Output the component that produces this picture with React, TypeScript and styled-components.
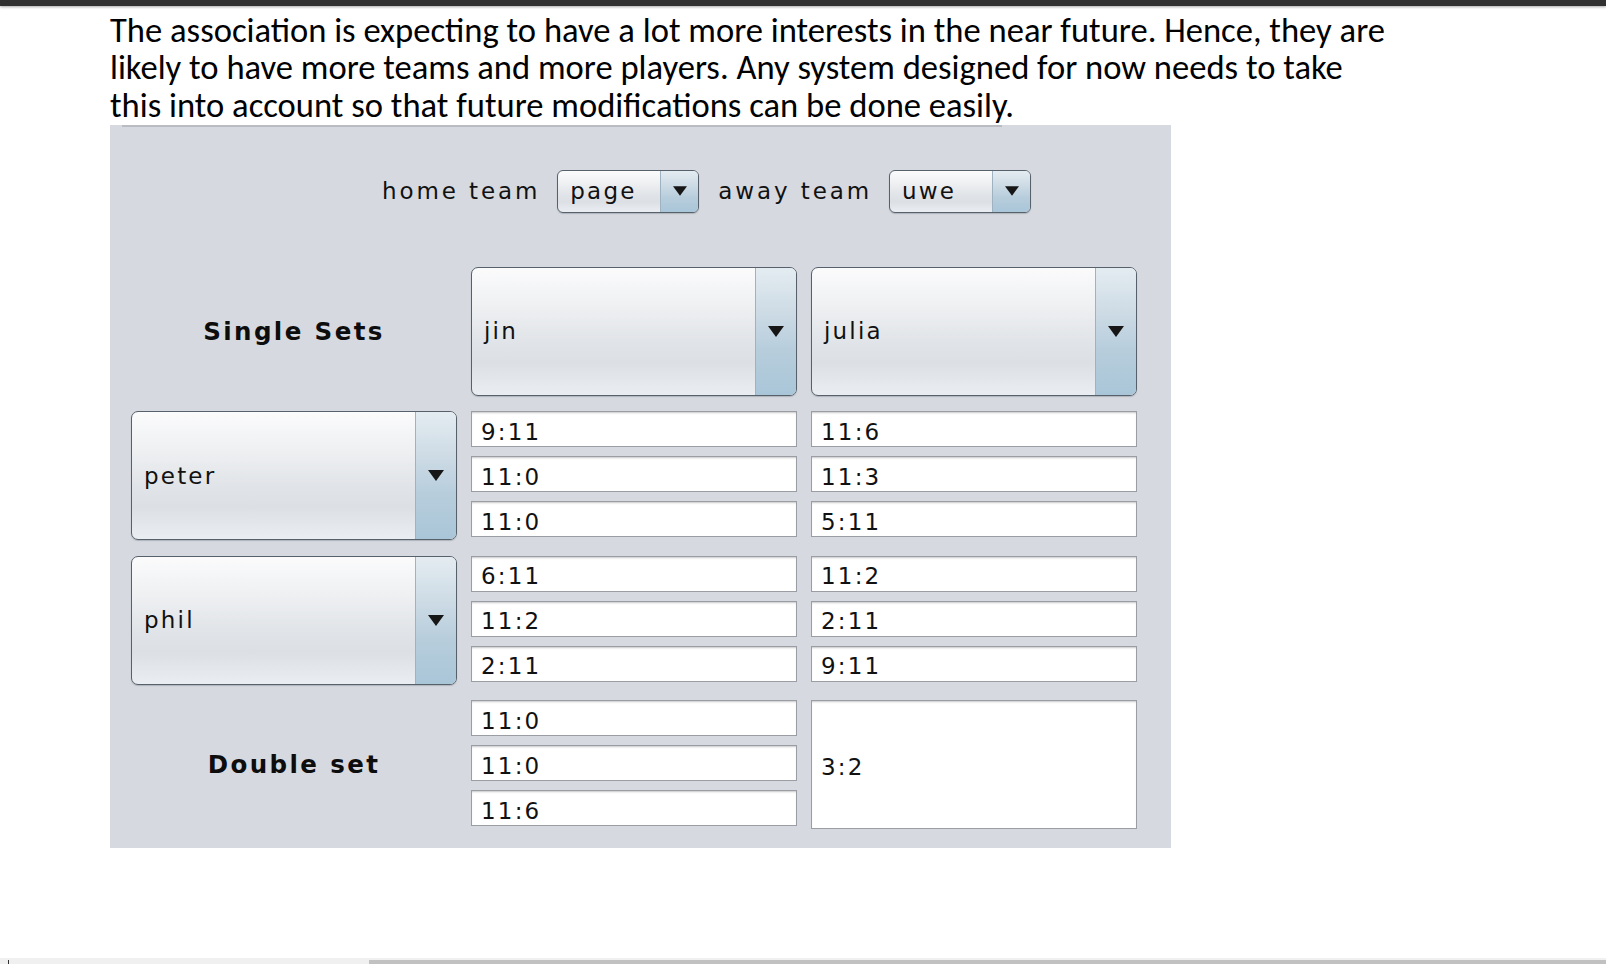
import React from "react";
import styled, { createGlobalStyle } from "styled-components";

const GlobalStyle = createGlobalStyle`
  html, body {
    margin: 0;
    padding: 0;
    background: #ffffff;
  }
  body {
    font-family: "Liberation Sans", Arial, sans-serif;
  }
`;

const Page = styled.div`
  min-height: 100vh;
  display: flex;
  flex-direction: column;
  overflow: hidden;
`;

const TopBar = styled.div`
  flex: none;
  height: 6px;
  background: #303030;
  box-shadow: 0 1px 3px rgba(0, 0, 0, 0.35);
`;

const Content = styled.main`
  flex: 1;
  padding-left: 110px;
`;

const Intro = styled.p`
  margin: 0;
  padding-top: 6px;
  font-family: Carlito, Lato, sans-serif;
  font-size: 34.6px;
  line-height: 37.33px;
  color: #000000;
  white-space: nowrap;
`;

const IntroLine = styled.span`
  display: block;
`;

const Panel = styled.section`
  box-sizing: border-box;
  width: 1061px;
  background: #d6d9df;
  padding-bottom: 19px;
`;

const TopEdge = styled.div`
  height: 2px;
  width: 880px;
  margin: 1px 0 0 12px;
  background: #b9bcc2;
`;

const TeamBar = styled.div`
  display: flex;
  align-items: center;
  gap: 19px;
  height: 43px;
  margin-top: 43px;
  padding-left: 272px;
`;

const uiFont = `
  font-family: "DejaVu Sans", "Liberation Sans", sans-serif;
  font-size: 23px;
  letter-spacing: 2.2px;
  color: #111111;
`;

const Label = styled.span`
  ${uiFont}
  letter-spacing: 2.9px;
  margin-right: -2px;
  white-space: nowrap;
`;

const Combo = styled.div<{ $large?: boolean }>`
  box-sizing: border-box;
  display: flex;
  align-items: stretch;
  width: ${(p) => (p.$large ? 326 : 142)}px;
  height: ${(p) => (p.$large ? 129 : 43)}px;
  border: 1.5px solid #56616c;
  border-radius: ${(p) => (p.$large ? 7 : 6)}px;
  overflow: hidden;
  background: linear-gradient(
    to bottom,
    #fbfbfc 0%,
    #eef0f2 30%,
    #e0e3e7 60%,
    #dcdfe4 75%,
    #eaedf2 100%
  );
  box-shadow: 0 1px 1px rgba(60, 70, 80, 0.25);
`;

const ComboValue = styled.span`
  ${uiFont}
  flex: 1;
  display: flex;
  align-items: center;
  padding-left: 12px;
  white-space: nowrap;
`;

const ComboArrow = styled.span<{ $large?: boolean }>`
  flex: none;
  width: ${(p) => (p.$large ? 40 : 37)}px;
  display: flex;
  align-items: center;
  justify-content: center;
  border-left: 1px solid #9eb2c1;
  background: linear-gradient(
    to bottom,
    #e4ecf1 0%,
    #cddbe5 35%,
    #b7cddc 65%,
    #a9c6d8 100%
  );
`;

const ScoreGrid = styled.div`
  display: grid;
  grid-template-columns: repeat(3, 326px);
  grid-auto-rows: 129px;
  column-gap: 14px;
  row-gap: 15.5px;
  margin: 54px 0 0 21px;
`;

const SectionLabel = styled.div`
  display: flex;
  align-items: center;
  justify-content: center;
  font-family: "DejaVu Sans", "Liberation Sans", sans-serif;
  font-size: 24.5px;
  font-weight: bold;
  letter-spacing: 2.4px;
  color: #0d0d0d;
  white-space: nowrap;
`;

const FieldStack = styled.div`
  display: flex;
  flex-direction: column;
  gap: 9px;
`;

const Field = styled.div<{ $tall?: boolean }>`
  ${uiFont}
  box-sizing: border-box;
  height: ${(p) => (p.$tall ? 129 : 36)}px;
  display: flex;
  align-items: center;
  padding: 5px 0 0 9px;
  background: #ffffff;
  border: 1px solid #9a9da3;
  box-shadow: inset 0 2px 2px -1px rgba(0, 0, 0, 0.22);
`;

const HScroll = styled.div`
  flex: none;
  box-sizing: border-box;
  height: 6px;
  padding-top: 2px;
  display: flex;
  align-items: stretch;
  background: #f0f0f0;
`;

const Tick = styled.span`
  width: 1px;
  margin-left: 8px;
  background: #333333;
`;

const Thumb = styled.span`
  flex: 1;
  margin-left: 360px;
  background: #c1c1c1;
`;

const Arrow = ({ large }: { large?: boolean }) => (
  <svg
    width={large ? 16 : 14}
    height={large ? 11 : 10}
    viewBox="0 0 16 11"
    aria-hidden
  >
    <polygon points="0,0 16,0 8,11" fill="#161616" />
  </svg>
);

const ComboBox = ({ value, large }: { value: string; large?: boolean }) => (
  <Combo $large={large}>
    <ComboValue>{value}</ComboValue>
    <ComboArrow $large={large}>
      <Arrow large={large} />
    </ComboArrow>
  </Combo>
);

const Scores = ({ values }: { values: string[] }) => (
  <FieldStack>
    {values.map((v, i) => (
      <Field key={i}>{v}</Field>
    ))}
  </FieldStack>
);

export default function App() {
  return (
    <Page>
      <GlobalStyle />
      <TopBar />
      <Content>
        <Intro>
          <IntroLine>
            The association is expecting to have a lot more interests in the near future. Hence, they are
          </IntroLine>
          <IntroLine>
            likely to have more teams and more players. Any system designed for now needs to take
          </IntroLine>
          <IntroLine>
            this into account so that future modifications can be done easily.
          </IntroLine>
        </Intro>
        <Panel>
          <TopEdge />
          <TeamBar>
            <Label>home team</Label>
            <ComboBox value="page" />
            <Label>away team</Label>
            <ComboBox value="uwe" />
          </TeamBar>
          <ScoreGrid>
            <SectionLabel>Single Sets</SectionLabel>
            <ComboBox value="jin" large />
            <ComboBox value="julia" large />

            <ComboBox value="peter" large />
            <Scores values={["9:11", "11:0", "11:0"]} />
            <Scores values={["11:6", "11:3", "5:11"]} />

            <ComboBox value="phil" large />
            <Scores values={["6:11", "11:2", "2:11"]} />
            <Scores values={["11:2", "2:11", "9:11"]} />

            <SectionLabel>Double set</SectionLabel>
            <Scores values={["11:0", "11:0", "11:6"]} />
            <Field $tall>3:2</Field>
          </ScoreGrid>
        </Panel>
      </Content>
      <HScroll>
        <Tick />
        <Thumb />
      </HScroll>
    </Page>
  );
}
